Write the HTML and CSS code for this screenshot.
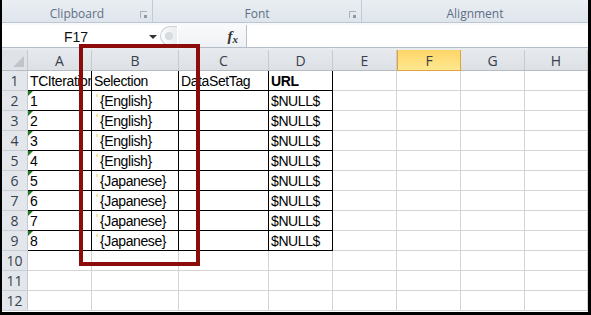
FILE: index.html
```html
<!DOCTYPE html>
<html>
<head>
<meta charset="UTF-8">
<title>Sheet1</title>
<link rel="stylesheet" href="styles.css">
</head>
<body>

<div class="window">

	<!-- ribbon group captions -->
	<div class="ribbon">
		<div class="group grpClip">Clipboard<span class="launcher"></span></div>
		<div class="group grpFont">Font<span class="launcher"></span></div>
		<div class="group grpAlign">Alignment</div>
	</div>

	<!-- name box + formula bar -->
	<div class="formulaBar">
		<div class="nameBox"><span class="nameTxt">F17</span><span class="dropArrow"></span></div>
		<div class="grip"><span class="knob"></span></div>
		<div class="fx">f<span class="fxSub">x</span></div>
		<div class="formula"></div>
	</div>

	<!-- sheet -->
	<div class="sheet">
		<div class="row head">
			<div class="corner"></div>
			<div class="col">A</div>
			<div class="col">B</div>
			<div class="col">C</div>
			<div class="col">D</div>
			<div class="col">E</div>
			<div class="col colSel">F</div>
			<div class="col">G</div>
			<div class="col last">H</div>
		</div>
		<div class="row">
			<div class="rh">1</div>
			<div class="c b">TCIteration</div>
			<div class="c b">Selection</div>
			<div class="c b">DataSetTag</div>
			<div class="c b url">URL</div>
			<div class="c"></div><div class="c"></div><div class="c"></div><div class="c last"></div>
		</div>
		<div class="row">
			<div class="rh">2</div>
			<div class="c b num">1</div>
			<div class="c b tag">{English}</div>
			<div class="c b"></div>
			<div class="c b">$NULL$</div>
			<div class="c"></div><div class="c"></div><div class="c"></div><div class="c last"></div>
		</div>
		<div class="row">
			<div class="rh">3</div>
			<div class="c b num">2</div>
			<div class="c b tag">{English}</div>
			<div class="c b"></div>
			<div class="c b">$NULL$</div>
			<div class="c"></div><div class="c"></div><div class="c"></div><div class="c last"></div>
		</div>
		<div class="row">
			<div class="rh">4</div>
			<div class="c b num">3</div>
			<div class="c b tag">{English}</div>
			<div class="c b"></div>
			<div class="c b">$NULL$</div>
			<div class="c"></div><div class="c"></div><div class="c"></div><div class="c last"></div>
		</div>
		<div class="row">
			<div class="rh">5</div>
			<div class="c b num">4</div>
			<div class="c b tag">{English}</div>
			<div class="c b"></div>
			<div class="c b">$NULL$</div>
			<div class="c"></div><div class="c"></div><div class="c"></div><div class="c last"></div>
		</div>
		<div class="row">
			<div class="rh">6</div>
			<div class="c b num">5</div>
			<div class="c b tag">{Japanese}</div>
			<div class="c b"></div>
			<div class="c b">$NULL$</div>
			<div class="c"></div><div class="c"></div><div class="c"></div><div class="c last"></div>
		</div>
		<div class="row">
			<div class="rh">7</div>
			<div class="c b num">6</div>
			<div class="c b tag">{Japanese}</div>
			<div class="c b"></div>
			<div class="c b">$NULL$</div>
			<div class="c"></div><div class="c"></div><div class="c"></div><div class="c last"></div>
		</div>
		<div class="row">
			<div class="rh">8</div>
			<div class="c b num">7</div>
			<div class="c b tag">{Japanese}</div>
			<div class="c b"></div>
			<div class="c b">$NULL$</div>
			<div class="c"></div><div class="c"></div><div class="c"></div><div class="c last"></div>
		</div>
		<div class="row">
			<div class="rh">9</div>
			<div class="c b num">8</div>
			<div class="c b tag">{Japanese}</div>
			<div class="c b"></div>
			<div class="c b">$NULL$</div>
			<div class="c"></div><div class="c"></div><div class="c"></div><div class="c last"></div>
		</div>
		<div class="row">
			<div class="rh">10</div>
			<div class="c"></div><div class="c"></div><div class="c"></div><div class="c"></div>
			<div class="c"></div><div class="c"></div><div class="c"></div><div class="c last"></div>
		</div>
		<div class="row">
			<div class="rh">11</div>
			<div class="c"></div><div class="c"></div><div class="c"></div><div class="c"></div>
			<div class="c"></div><div class="c"></div><div class="c"></div><div class="c last"></div>
		</div>
		<div class="row">
			<div class="rh">12</div>
			<div class="c"></div><div class="c"></div><div class="c"></div><div class="c"></div>
			<div class="c"></div><div class="c"></div><div class="c"></div><div class="c last"></div>
		</div>
	</div>

	<!-- red annotation box over column B -->
	<div class="markBox"></div>

</div>

</body>
</html>
```

FILE: styles.css
```css
* {box-sizing: border-box;}
body {margin: 0; background: #fff;}

.window {position: relative; width: 591px; height: 315px; overflow: hidden; background: #fff;
	border-left: 2px solid #000; border-right: 3px solid #000; border-bottom: 3px solid #000;
	font-family: "Liberation Sans", Arial, sans-serif;}

/* ribbon captions */
.ribbon {display: flex; height: 23px; background: linear-gradient(#eaeef3, #dfe5ec); border-bottom: 1px solid #bdc6d1;
	font-family: "Open Sans", "Liberation Sans", sans-serif; font-size: 12px; color: #5f6f86;}
.group {position: relative; display: flex; align-items: center; justify-content: center; padding-top: 4px;}
.grpClip {width: 151px; border-right: 1px solid #c3cad4;}
.grpFont {width: 209px; border-right: 1px solid #c3cad4;}
.grpAlign {flex: 1;}
.launcher {position: absolute; right: 5px; top: 11px; width: 7px; height: 7px; border-top: 1px solid #a8b0bc; border-left: 1px solid #a8b0bc;}
.launcher::after {content: ""; position: absolute; right: 0; bottom: 0; width: 3px; height: 3px; background: #8f98a6;}

/* formula bar */
.formulaBar {display: flex; height: 27px; background: #e8ecf1; border-top: 2px solid #f6f8fa; padding-bottom: 2px;}
.nameBox {position: relative; width: 158px; background: #fff; border-bottom: 1px solid #b3bcc7; display: flex; align-items: center; justify-content: center;
	font-size: 14px; color: #111; padding-top: 1px;}
.nameTxt {margin-right: 10px;}
.dropArrow {position: absolute; right: 3px; top: 10px; width: 0; height: 0; border-left: 4px solid transparent; border-right: 4px solid transparent; border-top: 4px solid #333;}
.grip {width: 18px; background: #fff; border-bottom: 1px solid #b3bcc7; display: flex; align-items: center;}
.knob {display: block; width: 17px; height: 20px; border: 1px solid #c9ced5; border-right: none; border-radius: 10px 0 0 10px; background: linear-gradient(90deg, #fafbfc, #e9ecf0);
	position: relative;}
.knob::after {content: ""; position: absolute; left: 4px; top: 5px; width: 8px; height: 8px; border-radius: 50%; background: #d7dbe0;}
.fx {width: 69px; background: linear-gradient(#f9fafb, #eef1f4); border-bottom: 1px solid #b3bcc7; border-right: 1px solid #b8c0ca;
	display: flex; align-items: center; justify-content: flex-end; padding-right: 8px;
	font-family: "Liberation Serif", serif; font-style: italic; font-weight: bold; font-size: 15px; color: #333;}
.fxSub {font-size: 11px; margin-top: 5px;}
.formula {flex: 1; background: #fff; border-bottom: 1px solid #b3bcc7;}

/* sheet grid */
.row {display: grid; grid-template-columns: 26px 64px 87px 90px 64px 64px 64px 64px 1fr; height: 20px;}
.head {height: 21px;}
.corner {position: relative; background: #dfe3e8; border-right: 1px solid #c5cad1; border-bottom: 1px solid #b6bcc4;}
.corner::after {content: ""; position: absolute; right: 3px; bottom: 3px; width: 0; height: 0; border-left: 11px solid transparent; border-bottom: 11px solid #c0c5cc;}
.col {background: linear-gradient(#e6e9ed, #dde1e6); border-right: 1px solid #c5cad1; border-bottom: 1px solid #b6bcc4;
	display: flex; align-items: center; justify-content: center; font-family: "Open Sans", sans-serif; font-size: 14px; color: #37404c;}
.colSel {background: linear-gradient(#fdd567, #ffe88f); border: 1px solid #e1a33d; border-top: none; color: #37404c;}
.rh {background: #e3e7ec; border-right: 1px solid #c5cad1; border-bottom: 1px solid #c9ced5;
	display: flex; align-items: center; justify-content: center; font-family: "Open Sans", sans-serif; font-size: 14px; color: #37404c;}

.c {position: relative; border-right: 1px solid #d4d4d4; border-bottom: 1px solid #d4d4d4; padding: 1px 0 0 2px;
	font-size: 14px; letter-spacing: -0.4px; line-height: 19px; color: #000; white-space: nowrap; overflow: hidden;}
.c.b {border-right-color: #000; border-bottom-color: #000;}
.c.last {border-right-color: #d4d4d4;}
.url {font-weight: bold;}
.num::before {content: ""; position: absolute; left: 0; top: 0; width: 0; height: 0; border-top: 5px solid #1c7c1c; border-right: 5px solid transparent;}
.tag {padding-left: 8px;}
.tag::before {content: ""; position: absolute; left: 4px; top: 3px; width: 2px; height: 3px; background: #efe79a;}

/* annotation */
.markBox {position: absolute; left: 77px; top: 44px; width: 121px; height: 222px; border: 4px solid #8c0b0b;}
```
